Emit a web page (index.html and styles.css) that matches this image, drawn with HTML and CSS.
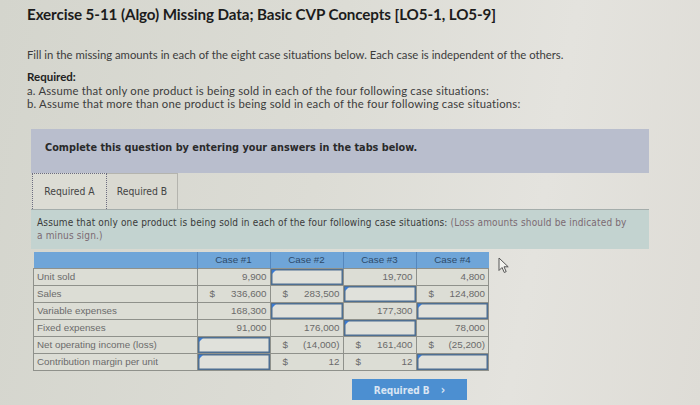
FILE: index.html
```html
<!DOCTYPE html>
<html>
<head>
<meta charset="utf-8">
<link rel="stylesheet" href="styles.css">
</head>
<body>
<div class="page">
  <h1 class="title">Exercise 5-11 (Algo) Missing Data; Basic CVP Concepts [LO5-1, LO5-9]</h1>
  <p class="intro">Fill in the missing amounts in each of the eight case situations below. Each case is independent of the others.</p>
  <div class="required">
    <div class="req-head">Required:</div>
    <div>a. Assume that only one product is being sold in each of the four following case situations:</div>
    <div>b. Assume that more than one product is being sold in each of the four following case situations:</div>
  </div>

  <div class="card">
    <div class="banner">Complete this question by entering your answers in the tabs below.</div>
    <div class="tabs">
      <div class="tab tab-active">Required A</div>
      <div class="tab">Required B</div>
    </div>
    <div class="instruction">
      <div class="ins-line">Assume that only one product is being sold in each of the four following case situations: <span class="note">(Loss amounts should be indicated by</span></div>
      <div class="ins-line note">a minus sign.)</div>
    </div>

    <table class="cvp">
      <thead>
        <tr><th class="lbl"></th><th>Case #1</th><th>Case #2</th><th>Case #3</th><th>Case #4</th></tr>
      </thead>
      <tbody>
        <tr>
          <td class="lbl">Unit sold</td>
          <td><div class="val"><span></span><span>9,900</span></div></td>
          <td class="inp"></td>
          <td><div class="val"><span></span><span>19,700</span></div></td>
          <td><div class="val"><span></span><span>4,800</span></div></td>
        </tr>
        <tr>
          <td class="lbl">Sales</td>
          <td><div class="val"><span>$</span><span>336,600</span></div></td>
          <td><div class="val"><span>$</span><span>283,500</span></div></td>
          <td class="inp"></td>
          <td><div class="val"><span>$</span><span>124,800</span></div></td>
        </tr>
        <tr>
          <td class="lbl">Variable expenses</td>
          <td><div class="val"><span></span><span>168,300</span></div></td>
          <td class="inp"></td>
          <td><div class="val"><span></span><span>177,300</span></div></td>
          <td class="inp"></td>
        </tr>
        <tr>
          <td class="lbl">Fixed expenses</td>
          <td><div class="val"><span></span><span>91,000</span></div></td>
          <td><div class="val"><span></span><span>176,000</span></div></td>
          <td class="inp"></td>
          <td><div class="val"><span></span><span>78,000</span></div></td>
        </tr>
        <tr>
          <td class="lbl">Net operating income (loss)</td>
          <td class="inp"></td>
          <td><div class="val"><span>$</span><span>(14,000)</span></div></td>
          <td><div class="val"><span>$</span><span>161,400</span></div></td>
          <td><div class="val"><span>$</span><span>(25,200)</span></div></td>
        </tr>
        <tr>
          <td class="lbl">Contribution margin per unit</td>
          <td class="inp"></td>
          <td><div class="val"><span>$</span><span>12</span></div></td>
          <td><div class="val"><span>$</span><span>12</span></div></td>
          <td class="inp"></td>
        </tr>
      </tbody>
    </table>

    <div class="actions">
      <button class="next-btn">Required B <span class="chev">&#8250;</span></button>
    </div>
  </div>

  <svg class="cursor" width="12" height="17" viewBox="0 0 12 17">
    <path d="M1 1 L1 13.5 L4 10.5 L6.3 15.5 L8.2 14.6 L6 9.8 L10.2 9.8 Z" fill="#f2f2ee" stroke="#555" stroke-width="1" stroke-linejoin="round"/>
  </svg>
</div>
</body>
</html>
```

FILE: styles.css
```css
html, body {
  margin: 0;
  padding: 0;
}

body {
  width: 700px;
  height: 405px;
  overflow: hidden;
  background: linear-gradient(100deg, #d4d5cd 0%, #dcdcd5 45%, #e4e3de 75%, #dedcd6 100%);
}

.page {
  position: relative;
  padding: 5px 0 0 27px;
  font-family: Lato, "Liberation Sans", sans-serif;
  color: #3a3a3a;
}

.title {
  margin: 0;
  font-family: Lato, "Liberation Sans", sans-serif;
  font-weight: 700;
  font-size: 15.2px;
  line-height: 18px;
  color: #1c1c1c;
  letter-spacing: -0.1px;
}

.intro {
  margin: 25px 0 0 0;
  font-size: 11.3px;
  line-height: 14px;
  color: #3c3c3c;
}

.required {
  margin-top: 8px;
  font-size: 11.3px;
  line-height: 13.5px;
  letter-spacing: 0.2px;
  color: #3c3c3c;
}

.req-head {
  font-weight: 700;
  font-size: 11.5px;
  letter-spacing: 0;
  color: #222;
}

.card {
  margin: 18px 0 0 4px;
  width: 618px;
  font-family: "DejaVu Sans Condensed", "DejaVu Sans", sans-serif;
}

.banner {
  height: 44px;
  box-sizing: border-box;
  padding: 12px 0 0 14px;
  background: #b9becd;
  font-weight: 700;
  font-size: 10.8px;
  line-height: 13px;
  color: #2a2a2a;
}

.tabs {
  display: flex;
  height: 36px;
  padding-left: 1px;
}

.tab {
  box-sizing: border-box;
  height: 36px;
  display: flex;
  align-items: center;
  justify-content: center;
  font-size: 10.3px;
  color: #444;
}

.tab-active {
  width: 75px;
  border: 1px dotted #6c6c80;
  border-bottom: none;
  background: #dcdcd4;
}

.tab:not(.tab-active) {
  width: 71px;
  border: 1px solid #b4b4ae;
  border-left: none;
  border-bottom: none;
  background: #d9d9d1;
}

.instruction {
  box-sizing: border-box;
  height: 40px;
  padding: 6px 6px 0 6px;
  background: #c3d3d0;
  border-top: 1px solid #a4adab;
  font-size: 10px;
  line-height: 13px;
  letter-spacing: 0.15px;
  color: #3a3a3a;
}

.ins-line {
  white-space: nowrap;
}

.note {
  color: #7b6a72;
}

.cvp {
  margin: 3px 0 0 2px;
  border-collapse: collapse;
  font-family: "Liberation Sans", Arial, sans-serif;
  font-size: 9.8px;
  color: #6a6a6a;
  table-layout: fixed;
}

.cvp th {
  height: 16px;
  padding: 0;
  background: #6fa5d8;
  border-left: 1px solid #5587bd;
  font-weight: 400;
  color: #2d4a6a;
  font-size: 9.8px;
  width: 72px;
}

.cvp th.lbl {
  width: 163px;
  border-left: none;
}

.cvp td {
  position: relative;
  height: 16px;
  padding: 0 3px 0 4px;
  border: 1px solid #8f918b;
  background: #dcddd5;
}

.cvp td.lbl {
  color: #6b6b6b;
  padding-left: 3px;
}

.val {
  display: flex;
  justify-content: space-between;
  padding-left: 8px;
}

.cvp td.inp {
  background: #e0e1db;
  box-shadow: inset 0 0 0 1.5px #4e6f92;
}

.cvp td.inp::before {
  content: "";
  position: absolute;
  left: 1px;
  top: 1px;
  width: 0;
  height: 0;
  border-top: 4px solid #3b7ad0;
  border-right: 4px solid transparent;
}

.actions {
  margin: 8px 0 0 321px;
}

.next-btn {
  width: 115px;
  height: 21px;
  border: none;
  background: #4c8fd1;
  color: #d9e5f3;
  font-family: "DejaVu Sans Condensed", "DejaVu Sans", sans-serif;
  font-weight: 700;
  font-size: 10px;
  padding: 0;
}

.chev {
  margin-left: 8px;
  font-size: 12px;
}

.cursor {
  position: absolute;
  left: 498px;
  top: 257px;
}
```
